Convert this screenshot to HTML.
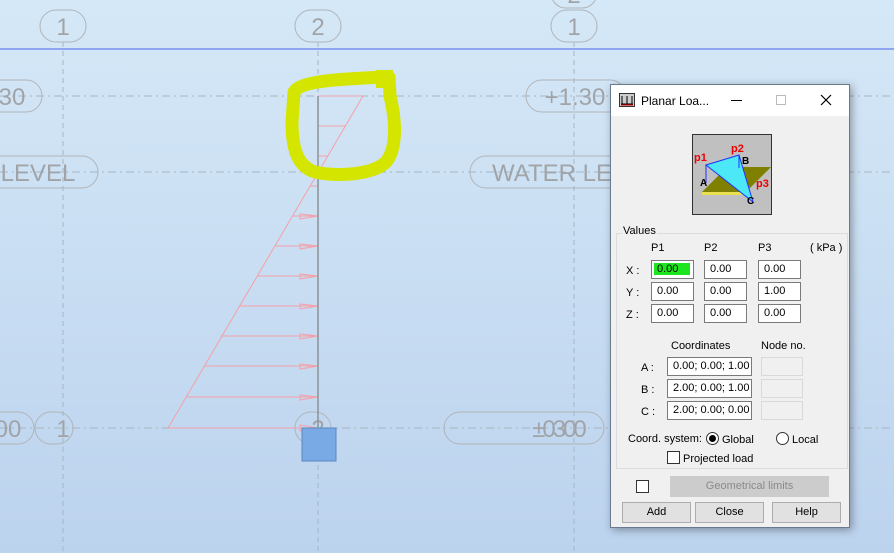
<!DOCTYPE html>
<html><head><meta charset="utf-8"><style>
*{box-sizing:border-box;margin:0;padding:0}
body{width:894px;height:553px;overflow:hidden;position:relative;font-family:"Liberation Sans",sans-serif;background:linear-gradient(#d5e8f7,#bcd3ee)}
.dlg{position:absolute;left:610px;top:84px;width:240px;height:444px;background:#f0f0f0;border:1px solid #6a7a8e;box-shadow:2px 2px 8px rgba(0,0,0,.35);font-size:11px;color:#000}
.tb{height:31px;background:#fff;position:relative}
.t{position:absolute;font-size:11px}
.in{position:absolute;height:19px;background:#fff;border:1px solid #7a7a7a;font-size:11px;padding:2px 0 0 5px}
.dis{position:absolute;height:19px;background:#f0f0f0;border:1px solid #d9d9d9}
.btn{position:absolute;height:21px;background:#e1e1e1;border:1px solid #adadad;text-align:center;font-size:11px;padding-top:3px}
</style></head><body>
<svg width="894" height="553" style="position:absolute;left:0;top:0" font-family="Liberation Sans" >
<g stroke="#a8b4c0" stroke-width="1" stroke-dasharray="8,4,2,4" fill="none">
<line x1="0" y1="96" x2="894" y2="96"/><line x1="0" y1="172" x2="894" y2="172"/><line x1="0" y1="428" x2="894" y2="428"/>
</g>
<g stroke="#a8b4c0" stroke-width="1" stroke-dasharray="5,4" fill="none">
<line x1="63" y1="42" x2="63" y2="553"/><line x1="318" y1="42" x2="318" y2="553"/><line x1="574" y1="42" x2="574" y2="553"/>
</g>
<line x1="0" y1="49" x2="894" y2="49" stroke="#7b8ff0" stroke-width="1.5"/>
<g fill="none" stroke="#b0b4b8" stroke-width="1">
<rect x="40" y="10" width="46" height="32" rx="16"/><rect x="295" y="10" width="46" height="32" rx="16"/><rect x="551" y="10" width="46" height="32" rx="16"/><rect x="551" y="-22" width="46" height="30" rx="15"/>
<rect x="-20" y="80" width="62" height="32" rx="16"/><rect x="-20" y="156" width="118" height="32" rx="16"/>
<rect x="526" y="80" width="100" height="32" rx="16"/><rect x="470" y="156" width="160" height="32" rx="16"/>
<rect x="-20" y="412" width="54" height="32" rx="16"/><rect x="35" y="412" width="38" height="32" rx="16"/><rect x="295" y="412" width="36" height="32" rx="16"/>
<rect x="444" y="412" width="160" height="32" rx="16"/></g>
<g fill="#a0a4a8" font-size="24" text-anchor="middle">
<text x="63" y="35">1</text><text x="318" y="35">2</text><text x="574" y="35">1</text><text x="574" y="3">2</text>
<text x="12" y="105">30</text><text x="38" y="181">LEVEL</text><text x="575" y="105">+1.30</text><text x="552" y="181">WATER LE</text>
<text x="8" y="437">00</text><text x="63" y="437">1</text><text x="318" y="437">2</text><text x="558" y="437" letter-spacing="-3">±0300</text>
</g>
<g stroke="#f4a0a8" stroke-width="1" fill="none">
<line x1="363" y1="96" x2="168" y2="428"/>
<line x1="318" y1="96" x2="363" y2="96"/><line x1="318" y1="126" x2="345" y2="126"/><line x1="318" y1="156" x2="328" y2="156"/>
<line x1="310" y1="186" x2="318" y2="186"/><line x1="292" y1="216" x2="318" y2="216"/><line x1="275" y1="246" x2="318" y2="246"/><line x1="257" y1="276" x2="318" y2="276"/><line x1="239" y1="306" x2="318" y2="306"/><line x1="221" y1="336" x2="318" y2="336"/><line x1="204" y1="366" x2="318" y2="366"/><line x1="186" y1="397" x2="318" y2="397"/><line x1="168" y1="428" x2="318" y2="428"/>
<path d="M300 214l18 2l-18 3zM300 244l18 2l-18 3zM300 274l18 2l-18 3zM300 304l18 2l-18 3zM300 334l18 2l-18 3zM300 364l18 2l-18 3zM300 395l18 2l-18 3zM300 425l18 3l-18 3z"/>
</g>
<line x1="318" y1="96" x2="318" y2="428" stroke="#8a9298" stroke-width="1.5"/>
<rect x="302" y="428" width="34" height="33" fill="#7aaae6" stroke="#5b86c0"/>
<path d="M294 92 C300 82 330 79 389 77 L390 96 C397 125 396 150 386 162 C372 176 330 177 312 171 C297 164 292 148 292 122 Z" fill="none" stroke="#d4e600" stroke-width="13" stroke-linejoin="round"/>
<rect x="376" y="70" width="17" height="18" fill="#d4e600"/>
</svg>
<div class="dlg">
<div class="tb">
<svg width="16" height="14" style="position:absolute;left:8px;top:8px"><rect x="0.5" y="0.5" width="15" height="13" fill="#ccc" stroke="#333"/><path d="M3 3v8M8 3v8M13 3v8M2 11h12" stroke="#000"/><path d="M2 12h12" stroke="#e00"/></svg>
<div class="t" style="left:30px;top:9px;font-size:12px">Planar Loa...</div>
<div style="position:absolute;left:120px;top:15px;width:11px;height:1px;background:#000"></div>
<div style="position:absolute;left:165px;top:10px;width:10px;height:10px;border:1px solid #bbb"></div>
<svg width="12" height="12" style="position:absolute;left:209px;top:9px"><path d="M1 1L11 11M11 1L1 11" stroke="#000" stroke-width="1.2"/></svg>
</div>
<svg width="80" height="81" style="position:absolute;left:81px;top:49px">
<rect x="0.5" y="0.5" width="79" height="80" fill="#c0c0c0" stroke="#333"/>
<path d="M10 58l25-25h44l-25 25z" fill="#808000"/><path d="M10 58h48v3h-48z" fill="#e8e050"/>
<path d="M14 31l33-10l14 47z" fill="#4de8f8" stroke="#2030ff"/><path d="M14 31v18M47 21v13" stroke="#2030ff"/>
<text x="2" y="27" fill="#e00" font-size="11" font-weight="bold">p1</text><text x="39" y="18" fill="#e00" font-size="11" font-weight="bold">p2</text><text x="64" y="53" fill="#e00" font-size="11" font-weight="bold">p3</text>
<text x="8" y="52" font-size="10" font-weight="bold">A</text><text x="50" y="30" font-size="10" font-weight="bold">B</text><text x="55" y="70" font-size="10" font-weight="bold">C</text>
</svg>
<div style="position:absolute;left:5px;top:148px;width:232px;height:236px;border:1px solid #dcdcdc"></div>
<div class="t" style="left:11px;top:140px;background:#f0f0f0;padding:0 1px">Values</div>
<div class="t" style="left:40px;top:157px">P1</div><div class="t" style="left:93px;top:157px">P2</div><div class="t" style="left:147px;top:157px">P3</div><div class="t" style="left:199px;top:157px">( kPa )</div>
<div class="t" style="left:15px;top:180px">X :</div><div class="t" style="left:15px;top:202px">Y :</div><div class="t" style="left:15px;top:224px">Z :</div>
<div class="in" style="left:40px;top:175px;width:43px"><span style="background:#1ee61e;display:block;margin:0 3px 0 -3px;padding-left:3px">0.00</span></div>
<div class="in" style="left:93px;top:175px;width:43px">0.00</div><div class="in" style="left:147px;top:175px;width:43px">0.00</div>
<div class="in" style="left:40px;top:197px;width:43px">0.00</div><div class="in" style="left:93px;top:197px;width:43px">0.00</div><div class="in" style="left:147px;top:197px;width:43px">1.00</div>
<div class="in" style="left:40px;top:219px;width:43px">0.00</div><div class="in" style="left:93px;top:219px;width:43px">0.00</div><div class="in" style="left:147px;top:219px;width:43px">0.00</div>
<div class="t" style="left:60px;top:255px">Coordinates</div><div class="t" style="left:150px;top:255px">Node no.</div>
<div class="t" style="left:30px;top:277px">A :</div><div class="t" style="left:30px;top:299px">B :</div><div class="t" style="left:30px;top:321px">C :</div>
<div class="in" style="left:56px;top:272px;width:85px">0.00; 0.00; 1.00</div><div class="in" style="left:56px;top:294px;width:85px">2.00; 0.00; 1.00</div><div class="in" style="left:56px;top:316px;width:85px">2.00; 0.00; 0.00</div>
<div class="dis" style="left:150px;top:272px;width:42px"></div><div class="dis" style="left:150px;top:294px;width:42px"></div><div class="dis" style="left:150px;top:316px;width:42px"></div>
<div class="t" style="left:17px;top:348px">Coord. system:</div>
<div style="position:absolute;left:95px;top:347px;width:13px;height:13px;border:1px solid #333;border-radius:50%;background:#fff"><div style="margin:2px;width:7px;height:7px;border-radius:50%;background:#000"></div></div>
<div class="t" style="left:111px;top:349px">Global</div>
<div style="position:absolute;left:165px;top:347px;width:13px;height:13px;border:1px solid #333;border-radius:50%;background:#fff"></div>
<div class="t" style="left:181px;top:349px">Local</div>
<div style="position:absolute;left:56px;top:366px;width:13px;height:13px;border:1px solid #333;background:#fff"></div>
<div class="t" style="left:72px;top:368px">Projected load</div>
<div style="position:absolute;left:25px;top:395px;width:13px;height:13px;border:1px solid #333;background:#fff"></div>
<div class="btn" style="left:59px;top:391px;width:159px;background:#cccccc;border-color:#ccc;color:#8a8a8a">Geometrical limits</div>
<div class="btn" style="left:11px;top:417px;width:69px">Add</div>
<div class="btn" style="left:84px;top:417px;width:69px">Close</div>
<div class="btn" style="left:161px;top:417px;width:69px">Help</div>
</div>
</body></html>
